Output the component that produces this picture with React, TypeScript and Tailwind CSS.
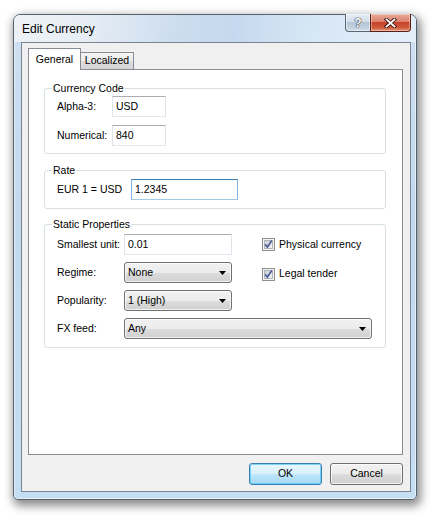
import React from "react";

function TextBox({ value, width, focused }: { value: string; width: string; focused?: boolean }) {
  return (
    <div
      className={`${width} h-[21px] flex items-center pl-[3px] bg-white border ${
        focused
          ? "border-t-[#3d7bad] border-x-[#7eb4ea] border-b-[#a4c9e3]"
          : "border-t-[#abadb3] border-x-[#e2e3ea] border-b-[#e3e9ef]"
      }`}
    >
      {value}
    </div>
  );
}

function ComboBox({ value, width }: { value: string; width: string }) {
  return (
    <div
      className={`${width} h-[21px] flex items-center justify-between pl-[3px] pr-[5px] rounded-[3px] border border-[#707070] bg-[linear-gradient(#f2f2f2_0%,#ebebeb_50%,#dddddd_51%,#cfcfcf_100%)] shadow-[inset_0_0_0_1px_rgba(255,255,255,0.75)]`}
    >
      <span>{value}</span>
      <svg width="7" height="4" viewBox="0 0 7 4">
        <path d="M0 0h7L3.5 4z" fill="#000" />
      </svg>
    </div>
  );
}

function CheckBox({ label }: { label: string }) {
  return (
    <div className="flex items-center gap-[4px]">
      <svg width="13" height="13" viewBox="0 0 13 13">
        <defs>
          <linearGradient id="cbfill" x1="0" y1="0" x2="1" y2="1">
            <stop offset="0" stopColor="#c9cdd3" />
            <stop offset="1" stopColor="#f7f7f7" />
          </linearGradient>
        </defs>
        <rect x="0.5" y="0.5" width="12" height="12" fill="#f4f4f4" stroke="#8e8f8f" />
        <rect x="2.5" y="2.5" width="8" height="8" fill="url(#cbfill)" stroke="#b0b4ba" />
        <path d="M3.2 6.4 L5.4 9 L9.8 2.6" stroke="#4a5d96" strokeWidth="1.7" fill="none" />
      </svg>
      <span>{label}</span>
    </div>
  );
}

function GroupBox({ title, className, children }: { title: string; className: string; children: React.ReactNode }) {
  return (
    <div className={`relative rounded-[3px] border border-[#d5dfe5] ${className}`}>
      <span className="absolute -top-[7px] left-[7px] px-[1px] bg-white leading-[13px]">{title}</span>
      {children}
    </div>
  );
}

export default function App() {
  return (
    <div className="w-[437px] h-[519px] bg-white pl-[13px] pt-[14px] font-['Liberation_Sans',Arial,sans-serif] text-[10.5px] text-black">
      {/* window */}
      <div className="relative w-[404px] h-[486px] flex flex-col rounded-t-[7px] rounded-b-[5px] border border-[#56636f] bg-[linear-gradient(180deg,#cfe0f1_0%,#c2d9ef_40%,#c4def4_100%)] shadow-[2px_4px_10px_2px_rgba(0,0,0,0.45),inset_0_0_0_1px_rgba(255,255,255,0.55)]">
        <div className="h-[27px] flex items-center pl-[8px] rounded-t-[6px] text-[12px] bg-[linear-gradient(100deg,#eef2f6_0%,#e6edf4_18%,#cbdcee_42%,#c5d9ee_55%,#d8e7f5_75%,#e4eef9_100%)]">
          Edit Currency
        </div>

        {/* caption buttons */}
        <div className="absolute -top-[1px] right-[5px] flex">
          <div className="w-[25px] h-[18px] flex items-center justify-center rounded-bl-[4px] border border-t-0 border-r-0 border-[#5a6571] bg-[linear-gradient(#e6edf4_0%,#d3dee9_45%,#b5c5d5_50%,#cbd9e7_100%)] shadow-[inset_0_0_0_1px_rgba(255,255,255,0.5)]">
            <span className="text-[12px] font-bold leading-none text-white [text-shadow:0_0_1px_#2b3440,0_0_1px_#2b3440,0_0_1px_#2b3440]">
              ?
            </span>
          </div>
          <div className="w-[41px] h-[18px] flex items-center justify-center rounded-br-[4px] border border-t-0 border-[#5c1f14] bg-[linear-gradient(#eaaa9b_0%,#dc816c_45%,#c7432a_50%,#d0593d_80%,#e39a80_100%)] shadow-[inset_0_0_0_1px_rgba(255,255,255,0.35)]">
            <svg width="13" height="10" viewBox="0 0 13 10">
              <path d="M2.5 1.5 L10.5 8.5 M10.5 1.5 L2.5 8.5" stroke="#3b1610" strokeWidth="3.6" strokeLinecap="square" />
              <path d="M2.5 1.5 L10.5 8.5 M10.5 1.5 L2.5 8.5" stroke="#ffffff" strokeWidth="1.8" strokeLinecap="square" />
            </svg>
          </div>
        </div>

        <div className="flex-1 flex pl-[7px] pr-[5px] pb-[7px]">
          {/* client area */}
          <div className="flex-1 flex flex-col border border-[#7a8591] bg-[#f0f0f0] pt-[5px] pl-[6px] pr-[7px]">
            {/* tabs */}
            <div className="relative z-10 h-[21px] flex items-end">
              <div className="w-[53px] h-[22px] -mb-[1px] flex items-center justify-center border border-b-0 border-[#898c95] bg-white">
                General
              </div>
              <div className="w-[53px] h-[17px] flex items-center justify-center border-t border-r border-[#898c95] bg-[linear-gradient(#f4f4f4_0%,#ebebeb_50%,#dedede_51%,#d4d4d4_100%)]">
                Localized
              </div>
            </div>

            {/* tab page */}
            <div className="h-[386px] flex flex-col border border-[#898c95] bg-white pt-[18px] pl-[15px] pr-[16px]">
              <GroupBox title="Currency Code" className="flex flex-col gap-[8px] pt-[7px] pb-[7px] pl-[12px]">
                <div className="h-[21px] flex items-center">
                  <span className="w-[55px]">Alpha-3:</span>
                  <TextBox value="USD" width="w-[54px]" />
                </div>
                <div className="h-[21px] flex items-center">
                  <span className="w-[55px]">Numerical:</span>
                  <TextBox value="840" width="w-[54px]" />
                </div>
              </GroupBox>

              <GroupBox title="Rate" className="mt-[16px] pt-[8px] pb-[8px] pl-[12px]">
                <div className="h-[21px] flex items-center">
                  <span className="w-[74px]">EUR 1 = USD</span>
                  <TextBox value="1.2345" width="w-[107px]" focused />
                </div>
              </GroupBox>

              <GroupBox title="Static Properties" className="mt-[15px] flex flex-col gap-[7px] pt-[9px] pb-[8px] pl-[12px]">
                <div className="h-[21px] flex items-center">
                  <span className="w-[67px]">Smallest unit:</span>
                  <TextBox value="0.01" width="w-[108px]" />
                  <div className="ml-[30px]">
                    <CheckBox label="Physical currency" />
                  </div>
                </div>
                <div className="h-[21px] flex items-center">
                  <span className="w-[67px]">Regime:</span>
                  <ComboBox value="None" width="w-[108px]" />
                  <div className="ml-[30px] mt-[3px]">
                    <CheckBox label="Legal tender" />
                  </div>
                </div>
                <div className="h-[21px] flex items-center">
                  <span className="w-[67px]">Popularity:</span>
                  <ComboBox value="1 (High)" width="w-[108px]" />
                </div>
                <div className="h-[21px] flex items-center">
                  <span className="w-[67px]">FX feed:</span>
                  <ComboBox value="Any" width="w-[248px]" />
                </div>
              </GroupBox>
            </div>

            {/* dialog buttons */}
            <div className="mt-[8px] flex justify-end gap-[8px]">
              <button className="w-[73px] h-[22px] rounded-[3px] border border-[#3c7fb1] bg-[linear-gradient(#eaf6fd_0%,#d9f0fc_50%,#bee6fd_51%,#a7d9f5_100%)] shadow-[inset_0_0_0_1px_#48c6f4aa]">
                OK
              </button>
              <button className="w-[73px] h-[22px] rounded-[3px] border border-[#707070] bg-[linear-gradient(#f2f2f2_0%,#ebebeb_50%,#dddddd_51%,#cfcfcf_100%)] shadow-[inset_0_0_0_1px_rgba(255,255,255,0.75)]">
                Cancel
              </button>
            </div>
          </div>
        </div>
      </div>
    </div>
  );
}
